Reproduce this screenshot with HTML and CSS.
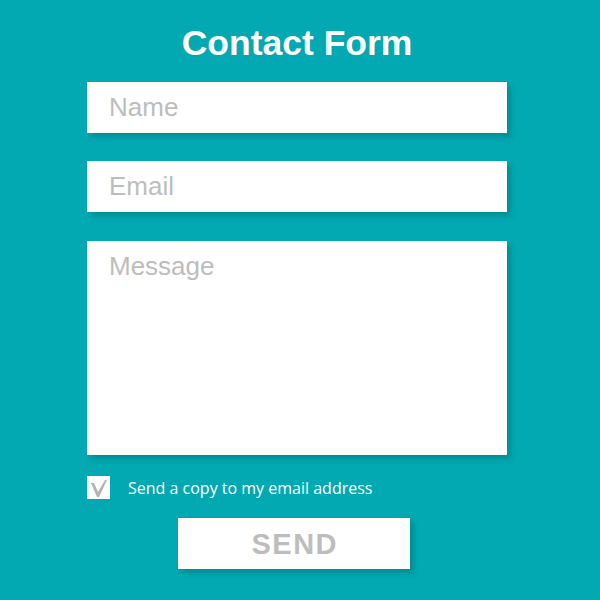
FILE: index.html
```html
<!DOCTYPE html>
<html lang="en">
<head>
    <meta charset="UTF-8">
    <meta name="viewport" content="width=device-width, initial-scale=1.0">
    <title>Contact Form</title>
    <link rel="stylesheet" href="styles.css">
</head>
<body>
    <form class="contactForm">
        <h1>Contact Form</h1>
        <input type="text" class="field" placeholder="Name">
        <input type="text" class="field" placeholder="Email">
        <textarea class="field message" placeholder="Message"></textarea>
        <label class="copyRow">
            <span class="checkBox">
                <svg width="23" height="23" viewBox="0 0 23 23">
                    <polygon points="4,7 7,7 11,16 18,4 20,4 12,21 10,21" fill="#b4b4b4"/>
                </svg>
            </span>
            <span class="copyText">Send a copy to my email address</span>
        </label>
        <button type="button" class="sendBtn">SEND</button>
    </form>
</body>
</html>
```

FILE: styles.css
```css
body {
    margin: 0;
    height: 600px;
    background-color: #02a9b2;
    font-family: "Liberation Sans", Arial, sans-serif;
}

.contactForm {
    width: 420px;
    margin-left: 87px;
    padding-top: 26px;
    display: flex;
    flex-direction: column;
}

h1 {
    margin: 0 0 21px 0;
    font-size: 35.5px;
    line-height: 35px;
    font-weight: bold;
    color: white;
    text-align: center;
}

.field {
    box-sizing: border-box;
    height: 51px;
    width: 420px;
    margin: 0 0 28px 0;
    padding: 0 10px 0 22px;
    border: none;
    background-color: white;
    box-shadow: 4px 4px 5px rgba(0, 60, 65, 0.25);
    font-family: "Liberation Sans", Arial, sans-serif;
    font-size: 26px;
    color: #555;
    outline: none;
}

.field::placeholder {
    color: #bdbdbd;
}

.message {
    height: 214px;
    margin-top: 1px;
    margin-bottom: 21px;
    padding-top: 10px;
    resize: none;
}

.copyRow {
    display: flex;
    align-items: center;
    gap: 18px;
    height: 23px;
}

.checkBox {
    width: 23px;
    height: 23px;
    background-color: white;
    display: flex;
}

.copyText {
    font-family: "Open Sans", sans-serif;
    font-size: 16px;
    color: white;
}

.sendBtn {
    align-self: flex-start;
    margin: 19px 0 0 91px;
    width: 232px;
    height: 51px;
    border: none;
    background-color: white;
    box-shadow: 4px 4px 5px rgba(0, 60, 65, 0.25);
    font-family: "Liberation Sans", Arial, sans-serif;
    font-size: 29px;
    font-weight: bold;
    letter-spacing: 1.5px;
    text-indent: 1.5px;
    color: #bdbdbd;
    padding: 2px 0 0 0;
}
```
